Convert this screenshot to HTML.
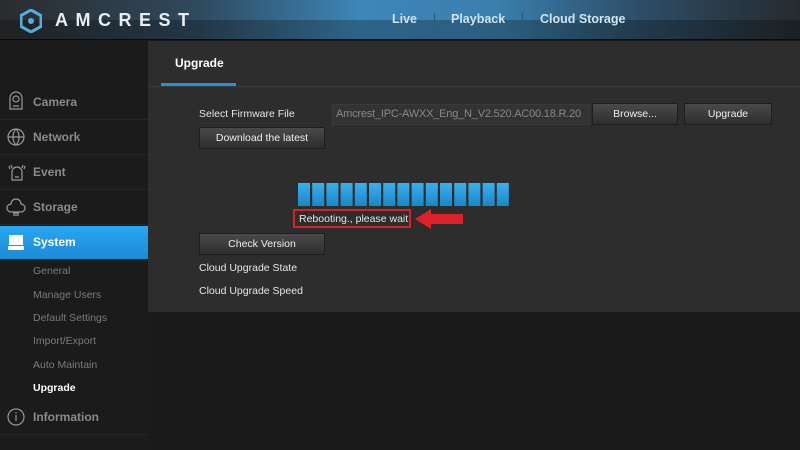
<!DOCTYPE html>
<html><head><meta charset="utf-8"><style>
*{margin:0;padding:0;box-sizing:border-box}
body{width:800px;height:450px;overflow:hidden;background:#1a1a1a;font-family:"Liberation Sans",sans-serif;position:relative}
.hdr{position:absolute;left:0;top:0;width:800px;height:40px;background:linear-gradient(90deg,#2a2c2e 0%,#2f4a5e 25%,#3d86b8 45%,#3a7fae 62%,#2d4d66 80%,#262a2e 100%);border-bottom:1px solid #0e0e0e}
.hdr:after{content:"";position:absolute;left:0;top:20px;width:100%;height:20px;background:rgba(0,0,0,.25)}
.logo{position:absolute;left:55px;top:10px;color:#e8eef2;font-size:18px;letter-spacing:7.5px;font-weight:bold;z-index:2}
.nav{position:absolute;top:12px;color:#cfe3f0;font-weight:bold;font-size:12.5px;z-index:2}
.sep{position:absolute;top:13px;width:1px;height:14px;background:#2a5878;z-index:2}
.side{position:absolute;left:0;top:41px;width:148px;height:409px;background:#1b1b1b}
.item{position:absolute;left:0;width:148px;height:35px;border-bottom:1px solid #262626;color:#8a8a8a;font-weight:bold;font-size:12px;line-height:35px;padding-left:33px}
.sub{position:absolute;left:33px;color:#7a7a7a;font-size:10.5px}
.panel{position:absolute;left:148px;top:41px;width:652px;height:271px;background:#2d2d2d}
.t{position:absolute;color:#e6e6e6;font-size:10.5px}
.btn{position:absolute;height:22px;background:linear-gradient(#4a4a4a,#2e2e2e);border:1px solid #1e1e1e;color:#eee;font-size:10.5px;text-align:center;line-height:20px}
.ico{position:absolute;left:6px}
</style></head><body>
<div class="hdr"></div>
<svg style="position:absolute;left:20px;top:9px;z-index:2" width="22" height="24" viewBox="0 0 22 24"><polygon points="11,1 21,6.5 21,17.5 11,23 1,17.5 1,6.5" fill="none" stroke="#4fb0e0" stroke-width="3"/><circle cx="11" cy="12" r="3" fill="#4fb0e0"/></svg>
<div class="logo">AMCREST</div>
<div class="nav" style="left:392px">Live</div><div class="sep" style="left:434px"></div>
<div class="nav" style="left:451px">Playback</div><div class="sep" style="left:522px"></div>
<div class="nav" style="left:540px">Cloud Storage</div>

<div class="side">
<div class="item" style="top:44px">Camera</div>
<div class="item" style="top:79px">Network</div>
<div class="item" style="top:114px">Event</div>
<div class="item" style="top:149px">Storage</div>
<div class="item" style="top:185px;height:33px;line-height:33px;background:linear-gradient(#2aa6f0,#1c8ad8);color:#fff;border:none">System</div>
<div style="position:absolute;left:148px;top:185px;width:0;height:0;border-top:16px solid transparent;border-bottom:17px solid transparent;border-left:7px solid #1f91dd"></div>
<div class="sub" style="top:224px">General</div>
<div class="sub" style="top:248px">Manage Users</div>
<div class="sub" style="top:271px">Default Settings</div>
<div class="sub" style="top:294px">Import/Export</div>
<div class="sub" style="top:318px">Auto Maintain</div>
<div class="sub" style="top:341px;color:#fff;font-weight:bold">Upgrade</div>
<div class="item" style="top:359px">Information</div>
<svg class="ico" style="top:50px" width="20" height="20" viewBox="0 0 20 20" fill="none" stroke="#999" stroke-width="1.2"><path d="M4 18V7a6 6 0 0 1 12 0v11z"/><circle cx="10" cy="8" r="3"/><path d="M7 15h6"/></svg>
<svg class="ico" style="top:86px" width="20" height="20" viewBox="0 0 20 20" fill="none" stroke="#999" stroke-width="1.2"><circle cx="10" cy="10" r="8"/><path d="M2 10h16M10 2c-4 4-4 12 0 16M10 2c4 4 4 12 0 16"/></svg>
<svg class="ico" style="top:121px" width="22" height="20" viewBox="0 0 22 20" fill="none" stroke="#999" stroke-width="1.2"><path d="M6 18V10a5 5 0 0 1 10 0v8zM9 15h4M3 4l1 3M5 3l1 3M19 4l-1 3M17 3l-1 3"/></svg>
<svg class="ico" style="top:157px" width="20" height="20" viewBox="0 0 20 20" fill="none" stroke="#999" stroke-width="1.2"><path d="M5 14a4 4 0 0 1 0-8 5 5 0 0 1 10 0 4 4 0 0 1 0 8zM7 15h6M7 17h6"/></svg>
<svg class="ico" style="top:193px" width="20" height="18" viewBox="0 0 20 18"><rect x="3" y="1" width="14" height="10" fill="#fff"/><rect x="2" y="12" width="16" height="4" fill="#fff"/></svg>
<svg class="ico" style="top:366px" width="20" height="20" viewBox="0 0 20 20" fill="none" stroke="#999" stroke-width="1.2"><circle cx="10" cy="10" r="8"/><path d="M10 8v6M10 5v1.5"/></svg>
</div>

<div class="panel">
<div style="position:absolute;left:0;top:45px;width:652px;height:1px;background:#3a3a3a"></div>
<div style="position:absolute;left:27px;top:15px;color:#fff;font-weight:bold;font-size:12px">Upgrade</div>
<div style="position:absolute;left:13px;top:42px;width:75px;height:3px;background:#2b8fd6"></div>
</div>
<div class="t" style="left:199px;top:108px">Select Firmware File</div>
<div style="position:absolute;left:332px;top:104px;width:258px;height:21px;background:#333;border:1px solid #3a3a3a;color:#888;font-size:11px;letter-spacing:-0.2px;line-height:19px;padding-left:3px;white-space:nowrap;overflow:hidden">Amcrest_IPC-AWXX_Eng_N_V2.520.AC00.18.R.20</div>
<div class="btn" style="left:592px;top:103px;width:86px">Browse...</div>
<div class="btn" style="left:684px;top:103px;width:88px">Upgrade</div>
<div class="btn" style="left:199px;top:127px;width:126px">Download the latest</div>
<svg style="position:absolute;left:298px;top:183px" width="214" height="24">
<defs><linearGradient id="g" x1="0" y1="0" x2="0" y2="1"><stop offset="0" stop-color="#3ab0ee"/><stop offset="1" stop-color="#1a86c8"/></linearGradient></defs>
<g fill="url(#g)">
<rect x="0" y="0" width="12" height="23"/><rect x="14.2" y="0" width="12" height="23"/><rect x="28.4" y="0" width="12" height="23"/><rect x="42.6" y="0" width="12" height="23"/><rect x="56.8" y="0" width="12" height="23"/><rect x="71" y="0" width="12" height="23"/><rect x="85.2" y="0" width="12" height="23"/><rect x="99.4" y="0" width="12" height="23"/><rect x="113.6" y="0" width="12" height="23"/><rect x="127.8" y="0" width="12" height="23"/><rect x="142" y="0" width="12" height="23"/><rect x="156.2" y="0" width="12" height="23"/><rect x="170.4" y="0" width="12" height="23"/><rect x="184.6" y="0" width="12" height="23"/><rect x="198.8" y="0" width="12" height="23"/></g></svg>
<div style="position:absolute;left:293px;top:209px;width:118px;height:19px;border:2px solid #d8222a"></div>
<div class="t" style="left:299px;top:213px">Rebooting., please wait</div>
<svg style="position:absolute;left:413px;top:207px" width="52" height="24"><polygon points="2,12 18,2 18,7 50,7 50,17 18,17 18,22" fill="#e02028"/></svg>
<div class="btn" style="left:199px;top:233px;width:126px">Check Version</div>
<div class="t" style="left:199px;top:262px">Cloud Upgrade State</div>
<div class="t" style="left:199px;top:285px">Cloud Upgrade Speed</div>
</body></html>
